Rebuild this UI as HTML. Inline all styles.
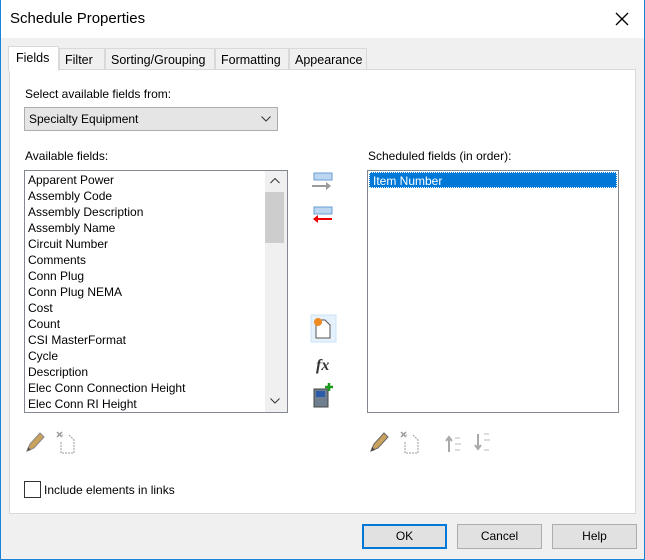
<!DOCTYPE html>
<html><head><style>
*{box-sizing:border-box;margin:0;padding:0}
body{width:645px;height:560px;overflow:hidden;font-family:"Liberation Sans",sans-serif;font-size:12px;color:#000;background:#f0f0f0;position:relative}
.a{position:absolute}
.win{left:0;top:0;width:645px;height:560px;border:1px solid #1883d7;border-top:none}
.title{left:1px;top:0;width:643px;height:38px;background:#fff}
.tab{position:absolute;top:48px;height:22px;border:1px solid #d9d9d9;background:#f0f0f0;padding:4px 5px 0;font-size:12.5px}
.list{background:#fff;border:1px solid #828790}
.it{height:16px;line-height:16px;padding-left:3px;font-size:12px;white-space:nowrap}
.btn{position:absolute;top:524px;width:85px;height:25px;border:1px solid #adadad;background:#e1e1e1;text-align:center;line-height:23px}
</style></head><body>
<div class="a win"></div>
<div class="a title"></div>
<div class="a" style="left:10px;top:10px;font-size:15px">Schedule Properties</div>
<svg class="a" style="left:615px;top:12px" width="14" height="14"><path d="M1 1l12 12M13 1L1 13" stroke="#000" stroke-width="1.3"/></svg>
<div class="a" style="left:9px;top:69px;width:627px;height:445px;background:#fff;border:1px solid #d9d9d9"></div>
<div class="tab" style="left:105px;width:110px">Sorting/Grouping</div>
<div class="tab" style="left:215px;width:74px">Formatting</div>
<div class="tab" style="left:289px;width:78px">Appearance</div>
<div class="tab" style="left:59px;width:46px">Filter</div>
<div class="tab" style="left:8px;top:46px;width:51px;height:25px;background:#fff;border-bottom:none;padding-left:7px">Fields</div>
<div class="a" style="left:25px;top:87px">Select available fields from:</div>
<div class="a" style="left:24px;top:107px;width:254px;height:24px;border:1px solid #adadad;background:#e5e5e5;padding:4px 0 0 4px">Specialty Equipment<svg style="position:absolute;right:6px;top:8px" width="10" height="6"><path d="M0.5 0.5l4.5 4.5 4.5-4.5" fill="none" stroke="#333"/></svg></div>
<div class="a" style="left:25px;top:149px">Available fields:</div>
<div class="a" style="left:368px;top:149px">Scheduled fields (in order):</div>
<div class="a list" style="left:24px;top:170px;width:264px;height:243px;padding-top:1px">
<div class="it">Apparent Power</div><div class="it">Assembly Code</div><div class="it">Assembly Description</div><div class="it">Assembly Name</div><div class="it">Circuit Number</div><div class="it">Comments</div><div class="it">Conn Plug</div><div class="it">Conn Plug NEMA</div><div class="it">Cost</div><div class="it">Count</div><div class="it">CSI MasterFormat</div><div class="it">Cycle</div><div class="it">Description</div><div class="it">Elec Conn Connection Height</div><div class="it">Elec Conn RI Height</div>
<div class="a" style="left:240px;top:0;width:22px;height:241px;background:#f0f0f0"></div>
<div class="a" style="left:240px;top:21px;width:19px;height:51px;background:#cdcdcd"></div>
<svg class="a" style="left:245px;top:7px" width="10" height="6"><path d="M0.5 5l4.5-4.5 4.5 4.5" fill="none" stroke="#333"/></svg>
<svg class="a" style="left:245px;top:227px" width="10" height="6"><path d="M0.5 0.5l4.5 4.5 4.5-4.5" fill="none" stroke="#333"/></svg>
</div>
<div class="a list" style="left:367px;top:170px;width:252px;height:243px">
<div class="a" style="left:1px;top:1px;width:248px;height:16px;background:#0078d7;color:#fff;line-height:16px;padding-left:3px;border:1px dotted #fff">Item Number</div>
</div>
<svg class="a" style="left:310px;top:170px" width="30" height="250">
<rect x="4" y="3" width="18" height="7" fill="#bcd6f0" stroke="#6a9fd4"/><path d="M2 15h14v-3l5 4-5 4v-3H2z" fill="#9a9a9a"/>
<rect x="4" y="37" width="18" height="7" fill="#bcd6f0" stroke="#6a9fd4"/><path d="M22 48H8v-3l-5 4 5 4v-3h14z" fill="#e00"/>
<rect x="1" y="145" width="25" height="27" fill="#e5f1fb" stroke="#cce4f7"/><path d="M6 150h9l5 5v13H6z" fill="#fff" stroke="#555"/><circle cx="8" cy="152" r="4" fill="#f08a24"/>
<text x="6" y="200" font-family="Liberation Serif" font-style="italic" font-weight="bold" font-size="16" fill="#333">fx</text>
<rect x="4" y="219" width="14" height="18" fill="#6f7f8f" stroke="#444"/><rect x="6" y="221" width="9" height="6" fill="#2a5caa"/><path d="M19 213v8M15 217h8" stroke="#1a9a1a" stroke-width="2.5"/>
</svg>
<svg class="a" style="left:24px;top:430px" width="480" height="26">
<g><path d="M3 21l3-7 10-11 4 4-10 11z" fill="#c9a25b" stroke="#888"/><path d="M3 21l1-4 3 3z" fill="#555"/></g>
<path d="M35 5h4M45 5l5 5v13H37V11" fill="none" stroke="#999" stroke-dasharray="2 1"/><path d="M33 2l5 5M38 2l-5 5" stroke="#999" stroke-width="1.5"/>
<g transform="translate(344 0)"><path d="M3 21l3-7 10-11 4 4-10 11z" fill="#c9a25b" stroke="#666"/><path d="M3 21l1-4 3 3z" fill="#444"/>
<path d="M35 5h4M45 5l5 5v13H37V11" fill="none" stroke="#999" stroke-dasharray="2 1"/><path d="M33 2l5 5M38 2l-5 5" stroke="#999" stroke-width="1.5"/>
<path d="M81 22V8M78 11l3-4 3 4" stroke="#aaa" stroke-width="2" fill="none"/><path d="M87 8h5M87 14h6M87 20h5" stroke="#bbb"/>
<path d="M110 4v14M107 15l3 4 3-4" stroke="#aaa" stroke-width="2" fill="none"/><path d="M116 4h5M116 10h6M116 20h5" stroke="#bbb"/></g>
</svg>
<div class="a" style="left:24px;top:481px;width:17px;height:17px;border:1px solid #333;background:#fff"></div>
<div class="a" style="left:44px;top:483px">Include elements in links</div>
<div class="btn" style="left:362px;border:2px solid #0078d7;line-height:21px">OK</div>
<div class="btn" style="left:457px">Cancel</div>
<div class="btn" style="left:552px">Help</div>
</body></html>
